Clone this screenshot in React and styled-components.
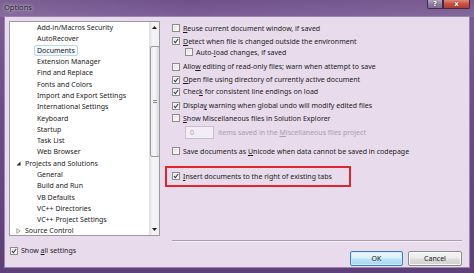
import React from 'react';
import styled, { createGlobalStyle } from 'styled-components';

const FONT = `"Noto Sans", "Liberation Sans", sans-serif`;

const Global = createGlobalStyle`
  html, body { margin: 0; padding: 0; width: 474px; height: 273px; overflow: hidden; background: #5b3d76; }
  #root { width: 474px; height: 273px; }
  * { box-sizing: border-box; }
`;

const Window = styled.div`
  width: 474px;
  height: 273px;
  display: flex;
  flex-direction: column;
  font-family: ${FONT};
  font-size: 7px;
  color: #1b1b1b;
  background: linear-gradient(180deg, #6a4a86 0%, #7a5c94 8%, #6c4d88 40%, #5e4079 100%);
`;

const TitleBar = styled.div`
  height: 17px;
  flex: none;
  display: flex;
  align-items: flex-start;
  padding: 0 4px 0 4px;
  background: linear-gradient(90deg, rgba(255,255,255,0.12) 0%, rgba(255,255,255,0.04) 40%, rgba(255,255,255,0.1) 100%);
`;

const Title = styled.div`
  margin-top: 2px;
  font-size: 7.5px;
  line-height: 11px;
  color: #141414;
  text-shadow: 0 0 4px rgba(255,255,255,0.75), 0 0 2px rgba(255,255,255,0.6);
`;

const CaptionButtons = styled.div`
  margin-left: auto;
  display: flex;
`;

const CaptionButton = styled.div`
  width: ${p => p.$w}px;
  height: 9px;
  display: flex;
  align-items: center;
  justify-content: center;
  font-family: "DejaVu Sans", sans-serif;
  font-weight: bold;
  font-size: 7px;
  color: #fff;
  border: 1px solid #3d2856;
  border-top: none;
  border-radius: 0 0 ${p => p.$r || '0 0'};
  background: ${p => p.$close
    ? 'linear-gradient(180deg, #e08a78 0%, #c9503d 50%, #b83b2a 100%)'
    : 'linear-gradient(180deg, #b7a7c4 0%, #93809f 50%, #7f6a8e 100%)'};
  text-shadow: 0 0 2px #222;
`;

const Frame = styled.div`
  flex: 1;
  display: flex;
  padding: 0 5px 6px 5px;
  min-height: 0;
`;

const Client = styled.div`
  flex: 1;
  display: flex;
  background: #e7dbec;
  box-shadow: 0 0 0 1px #9d86ad;
  min-height: 0;
`;

const LeftCol = styled.div`
  width: 155px;
  flex: none;
  display: flex;
  flex-direction: column;
  padding: 4px 0 0 4px;
`;

const TreePanel = styled.div`
  width: 151px;
  height: 215px;
  display: flex;
  background: #fff;
  border: 1px solid #9e97a6;
  overflow: hidden;
`;

const TreeList = styled.div`
  flex: 1;
  overflow: hidden;
`;

const TreeItem = styled.div`
  height: 11.3px;
  line-height: 11.3px;
  display: flex;
  align-items: center;
  white-space: nowrap;
  padding-left: ${p => (p.$level === 1 ? 6 : 18)}px;
`;

const Expander = styled.span`
  width: 9px;
  flex: none;
  display: flex;
  align-items: center;
`;

const ItemLabel = styled.span`
  padding: 0 2px;
  margin-left: -3px;
  line-height: 9px;
  border: 1px solid ${p => (p.$selected ? '#b9d6ec' : 'transparent')};
  border-radius: 2px;
  background: ${p => (p.$selected ? 'linear-gradient(180deg,#fbfdff,#eef5fb)' : 'transparent')};
`;

const ScrollBar = styled.div`
  width: 10px;
  flex: none;
  display: flex;
  flex-direction: column;
  align-items: center;
  background: linear-gradient(90deg, #e4e4e4 0%, #f4f4f4 30%, #f0f0f0 100%);
  border-left: 1px solid #e2e2e2;
`;

const ArrowBox = styled.div`
  height: 11px;
  flex: none;
  display: flex;
  align-items: center;
  justify-content: center;
  width: 100%;
`;

const Thumb = styled.div`
  margin-top: 13px;
  width: 10px;
  height: 111px;
  border: 1px solid #9a9a9a;
  border-radius: 2px;
  background: linear-gradient(90deg, #ececec 0%, #f6f6f6 45%, #d9d9d9 100%);
  display: flex;
  align-items: center;
  justify-content: center;
`;

const Grip = styled.div`
  width: 4px;
  height: 4px;
  background: repeating-linear-gradient(180deg, #8c8c8c 0 1px, #eaeaea 1px 2px);
`;

const Spacer = styled.div`
  flex: 1;
`;

const ShowAllRow = styled.div`
  margin-top: 9px;
  height: 11px;
  display: flex;
  align-items: center;
  gap: 3px;
  padding-left: 1px;
`;

const RightCol = styled.div`
  flex: 1;
  display: flex;
  flex-direction: column;
  padding: 5.5px 7px 0 5px;
`;

const Options = styled.div`
  display: flex;
  flex-direction: column;
  height: 210px;
`;

const Row = styled.div`
  height: 11px;
  margin-top: ${p => p.$mt || 0}px;
  display: flex;
  align-items: center;
  gap: 3px;
  white-space: nowrap;
  padding-left: ${p => 7 + (p.$indent ? 13 : 0)}px;
`;

const Highlight = styled.div`
  margin-top: 9px;
  height: 21px;
  width: 186px;
  border: 2px solid #e3242f;
  display: flex;
  align-items: center;
  padding-left: 5px;
`;

const InnerRow = styled.div`
  display: flex;
  align-items: center;
  gap: 3px;
  white-space: nowrap;
`;

const NumberRow = styled.div`
  margin-top: 2px;
  height: 13px;
  display: flex;
  align-items: center;
  gap: 4px;
  padding-left: 20px;
`;

const NumberBox = styled.div`
  width: 29px;
  height: 13px;
  border: 1px solid #c8bfcc;
  background: #f3eef5;
  color: #a9a2ad;
  padding-left: 4px;
  line-height: 11px;
`;

const Muted = styled.span`
  color: #a7a0ab;
`;

const U = styled.span`
  text-decoration: underline;
  text-underline-offset: 1px;
`;

const Separator = styled.div`
  margin: 7px 0 0 7px;
  height: 1px;
  background: #a79fb1;
  box-shadow: 0 1px 0 #f3eef6;
`;

const Buttons = styled.div`
  margin-top: 10px;
  display: flex;
  justify-content: flex-end;
  gap: 5px;
`;

const Button = styled.div`
  width: ${p => p.$w}px;
  height: 15px;
  display: flex;
  align-items: center;
  justify-content: center;
  border-radius: 2px;
  font-size: 7px;
  color: #1b1b1b;
  border: 1px solid ${p => (p.$primary ? '#3c7fb1' : '#8a8a8a')};
  box-shadow: inset 0 0 0 1px ${p => (p.$primary ? 'rgba(200,235,255,0.9)' : 'rgba(255,255,255,0.8)')};
  background: ${p => p.$primary
    ? 'linear-gradient(180deg, #edf7fd 0%, #dcf0fb 48%, #bfe3f7 52%, #a9d7f1 100%)'
    : 'linear-gradient(180deg, #f3f3f3 0%, #ebebeb 48%, #dedede 52%, #d0d0d0 100%)'};
`;

const BoxWrap = styled.span`
  width: 8px;
  height: 8px;
  flex: none;
  display: inline-flex;
  border: 1px solid #8c8c8c;
  background: linear-gradient(135deg, #d8d8d8 0%, #f2f2f2 60%, #ffffff 100%);
  box-shadow: inset 0 0 0 1px #f4f4f4;
`;

function CheckBox({ checked }) {
  return (
    <BoxWrap>
      {checked && (
        <svg width="6" height="6" viewBox="0 0 6 6">
          <path d="M1 3.2 L2.4 4.7 L5.1 1" fill="none" stroke="#2c3a4d" strokeWidth="1.1" />
        </svg>
      )}
    </BoxWrap>
  );
}

const treeItems = [
  { l: 2, t: 'Add-in/Macros Security' },
  { l: 2, t: 'AutoRecover' },
  { l: 2, t: 'Documents', sel: true },
  { l: 2, t: 'Extension Manager' },
  { l: 2, t: 'Find and Replace' },
  { l: 2, t: 'Fonts and Colors' },
  { l: 2, t: 'Import and Export Settings' },
  { l: 2, t: 'International Settings' },
  { l: 2, t: 'Keyboard' },
  { l: 2, t: 'Startup' },
  { l: 2, t: 'Task List' },
  { l: 2, t: 'Web Browser' },
  { l: 1, t: 'Projects and Solutions', exp: 'open' },
  { l: 2, t: 'General' },
  { l: 2, t: 'Build and Run' },
  { l: 2, t: 'VB Defaults' },
  { l: 2, t: 'VC++ Directories' },
  { l: 2, t: 'VC++ Project Settings' },
  { l: 1, t: 'Source Control', exp: 'closed' },
];

function ExpIcon({ kind }) {
  if (kind === 'open') {
    return (
      <svg width="5" height="5" viewBox="0 0 5 5">
        <path d="M4.5 0.5 L4.5 4.5 L0.5 4.5 Z" fill="#262626" />
      </svg>
    );
  }
  return (
    <svg width="5" height="6" viewBox="0 0 5 6">
      <path d="M0.8 0.6 L4.2 3 L0.8 5.4 Z" fill="none" stroke="#8d8d8d" strokeWidth="0.8" />
    </svg>
  );
}

export default function App() {
  return (
    <>
      <Global />
      <Window>
        <TitleBar>
          <Title>Options</Title>
          <CaptionButtons>
            <CaptionButton $w={16} $r="0 2px">?</CaptionButton>
            <CaptionButton $w={27} $close $r="2px 0">x</CaptionButton>
          </CaptionButtons>
        </TitleBar>
        <Frame>
          <Client>
            <LeftCol>
              <TreePanel>
                <TreeList>
                  {treeItems.map((it, i) => (
                    <TreeItem key={i} $level={it.l}>
                      <Expander>{it.exp && <ExpIcon kind={it.exp} />}</Expander>
                      <ItemLabel $selected={it.sel}>{it.t}</ItemLabel>
                    </TreeItem>
                  ))}
                </TreeList>
                <ScrollBar>
                  <ArrowBox>
                    <svg width="5" height="3" viewBox="0 0 5 3"><path d="M0 3 L2.5 0 L5 3 Z" fill="#1e1e1e" /></svg>
                  </ArrowBox>
                  <Thumb><Grip /></Thumb>
                  <Spacer />
                  <ArrowBox>
                    <svg width="5" height="3" viewBox="0 0 5 3"><path d="M0 0 L2.5 3 L5 0 Z" fill="#1e1e1e" /></svg>
                  </ArrowBox>
                </ScrollBar>
              </TreePanel>
              <ShowAllRow>
                <CheckBox checked />
                <span>Show <U>a</U>ll settings</span>
              </ShowAllRow>
            </LeftCol>
            <RightCol>
              <Options>
                <Row>
                  <CheckBox />
                  <span><U>R</U>euse current document window, if saved</span>
                </Row>
                <Row $mt={2.3}>
                  <CheckBox checked />
                  <span><U>D</U>etect when file is changed outside the environment</span>
                </Row>
                <Row $indent $mt={0}>
                  <CheckBox />
                  <span>Auto-<U>l</U>oad changes, if saved</span>
                </Row>
                <Row $mt={3.4}>
                  <CheckBox />
                  <span>Allo<U>w</U> editing of read-only files; warn when attempt to save</span>
                </Row>
                <Row $mt={2.3}>
                  <CheckBox checked />
                  <span><U>O</U>pen file using directory of currently active document</span>
                </Row>
                <Row $mt={1}>
                  <CheckBox checked />
                  <span>Chec<U>k</U> for consistent line endings on load</span>
                </Row>
                <Row $mt={2.7}>
                  <CheckBox checked />
                  <span>Displa<U>y</U> warning when global undo will modify edited files</span>
                </Row>
                <Row $mt={1.6}>
                  <CheckBox />
                  <span><U>S</U>how Miscellaneous files in Solution Explorer</span>
                </Row>
                <NumberRow>
                  <NumberBox>0</NumberBox>
                  <Muted>items saved in the <U>M</U>iscellaneous files project</Muted>
                </NumberRow>
                <Row $mt={7.2}>
                  <CheckBox />
                  <span>Save documents as <U>U</U>nicode when data cannot be saved in codepage</span>
                </Row>
                <Highlight>
                  <InnerRow>
                    <CheckBox checked />
                    <span><U>I</U>nsert documents to the right of existing tabs</span>
                  </InnerRow>
                </Highlight>
              </Options>
              <Separator />
              <Buttons>
                <Button $w={53} $primary>OK</Button>
                <Button $w={54}>Cancel</Button>
              </Buttons>
            </RightCol>
          </Client>
        </Frame>
      </Window>
    </>
  );
}
